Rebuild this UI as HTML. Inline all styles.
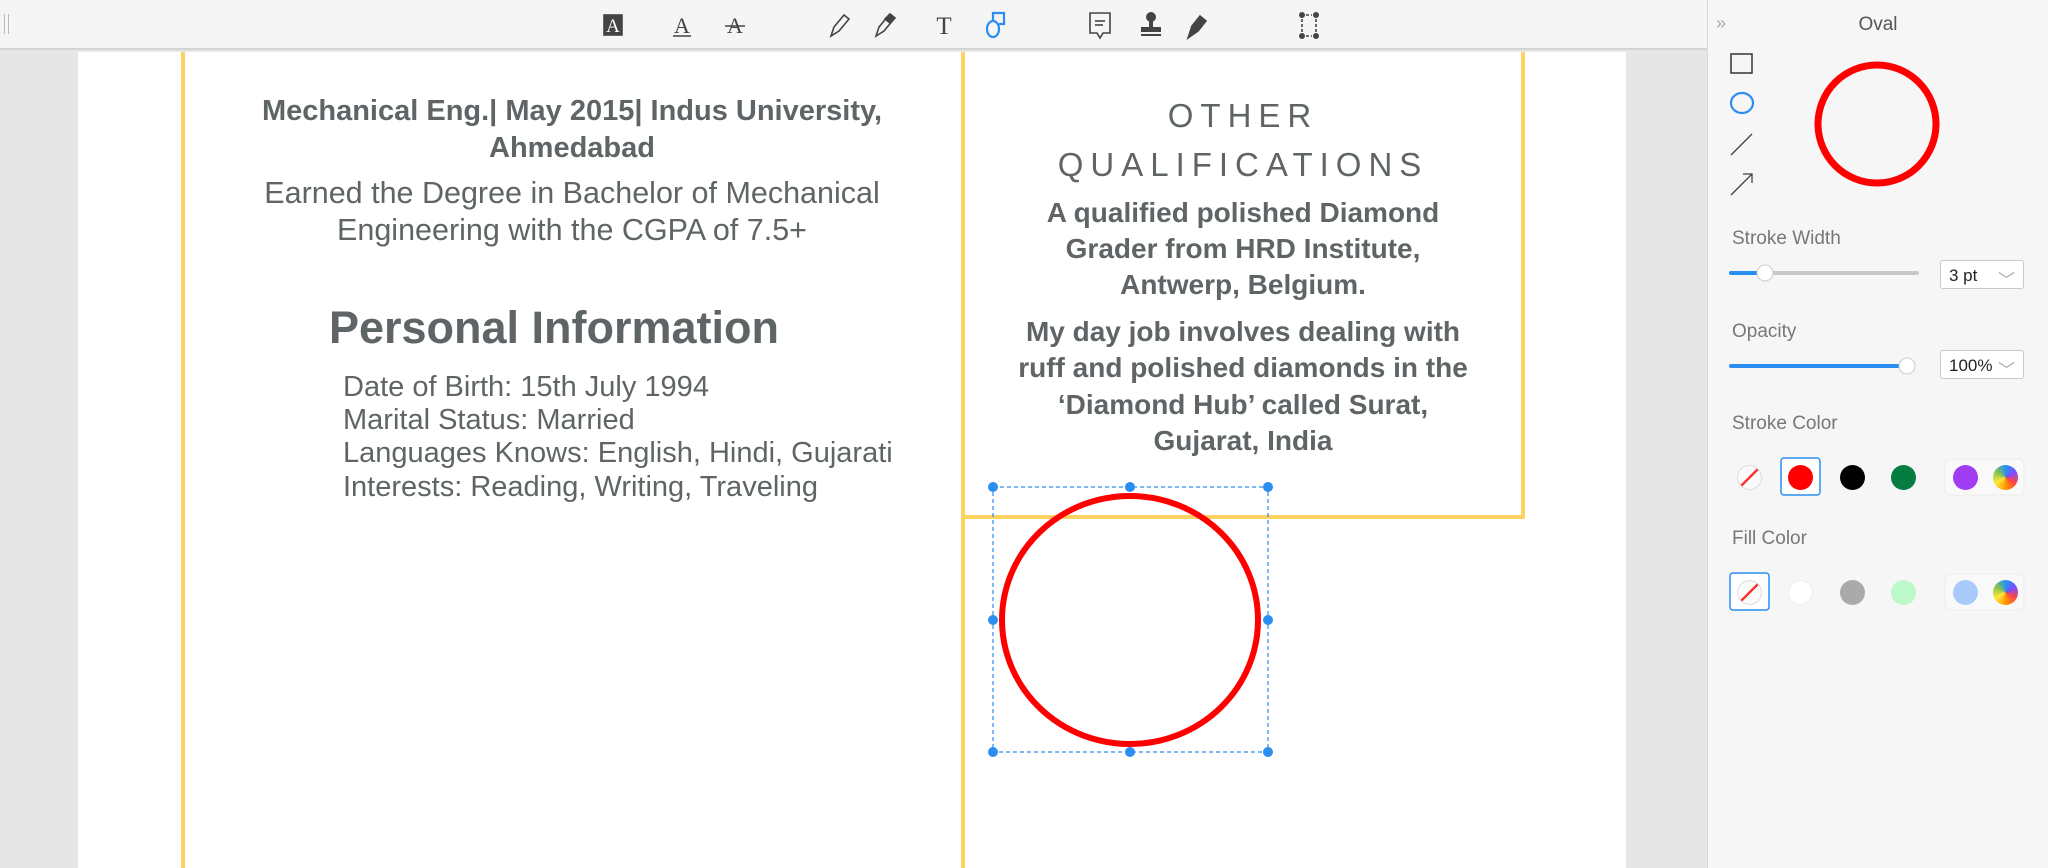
<!DOCTYPE html>
<html><head><meta charset="utf-8"><style>
*{margin:0;padding:0;box-sizing:border-box}
body{width:2048px;height:868px;overflow:hidden;background:#e6e6e6;font-family:"Liberation Sans",sans-serif;position:relative}
.a{position:absolute}
.t{position:absolute;color:#5f6566;white-space:nowrap;text-align:center;line-height:36px;transform:translateY(-18px)}
.b{font-weight:bold}
.lbl{position:absolute;color:#777;font-size:19px;transform:translateY(-11px)}
.dd{position:absolute;width:84px;height:29px;border:1px solid #c8c8c8;border-radius:3px;background:#fff;font-size:17px;color:#222;padding:5px 0 0 8px}
.sw{position:absolute;width:25px;height:25px;border-radius:50%;transform:translate(-12px,-12px)}
</style></head><body>
<!-- toolbar -->
<div class="a" style="left:0;top:0;width:1707px;height:50px;background:#f5f5f5;border-bottom:2px solid #d4d4d4"></div>
<div class="a" style="left:4px;top:14px;width:5px;height:20px;border-left:1px solid #bbb;border-right:1px solid #bbb"></div>
<svg class="a" style="left:0;top:0" width="1707" height="50" fill="none" stroke="#444" stroke-width="1.6">
<rect x="604" y="15" width="18" height="20" fill="#444"/><text x="613" y="32" font-family="Liberation Serif" font-size="19" fill="#fff" stroke="none" text-anchor="middle">A</text>
<text x="682" y="33" font-family="Liberation Serif" font-size="22" fill="#444" stroke="none" text-anchor="middle">A</text><line x1="673" y1="36" x2="691" y2="36"/>
<text x="735" y="33" font-family="Liberation Serif" font-size="22" fill="#444" stroke="none" text-anchor="middle">A</text><line x1="725" y1="26" x2="745" y2="26"/>
<path d="M831 36 l3-9 l10-12 l5 4 l-10 12 z"/>
<path d="M876 36 l3-9 l10-12 l5 4 l-10 12 z"/><path d="M885 19 l5-5 l5 4 l-5 5z" fill="#444"/>
<text x="944" y="34" font-family="Liberation Serif" font-size="25" fill="#444" stroke="none" text-anchor="middle">T</text>
<g stroke="#2a8df0" stroke-width="2.2"><ellipse cx="993" cy="29" rx="6" ry="8"/><path d="M993 21 v-8 h11 v11 h-5"/></g>
<path d="M1090 13 h20 v20 h-7 l-3 5 l-3 -5 h-7z"/><line x1="1095" y1="21" x2="1105" y2="21"/><line x1="1095" y1="25" x2="1103" y2="25"/>
<g fill="#444" stroke="none"><circle cx="1151" cy="17" r="5"/><rect x="1149" y="20" width="4" height="8"/><rect x="1141" y="27" width="20" height="5"/><rect x="1141" y="34" width="20" height="2"/></g>
<path d="M1188 38 l4-12 l8-10 l6 5 l-8 10 z" fill="#444"/>
<g fill="#444" stroke="none"><circle cx="1302" cy="15" r="3"/><circle cx="1316" cy="15" r="3"/><circle cx="1302" cy="36" r="3"/><circle cx="1316" cy="36" r="3"/></g>
<path d="M1306 15h6M1306 36h6M1302 19v13M1316 19v13" stroke-dasharray="3 2"/>
</svg>
<!-- page -->
<div class="a" style="left:78px;top:52px;width:1548px;height:816px;background:#fff"></div>
<div class="a" style="left:181px;top:52px;width:4px;height:816px;background:#fdd25e"></div>
<div class="a" style="left:961px;top:52px;width:4px;height:816px;background:#fdd25e"></div>
<div class="a" style="left:1521px;top:52px;width:4px;height:467px;background:#fdd25e"></div>
<div class="a" style="left:961px;top:515px;width:564px;height:4px;background:#fdd25e"></div>
<div class="t b" style="left:172px;width:800px;top:111px;font-size:29px">Mechanical Eng.| May 2015| Indus University,</div>
<div class="t b" style="left:172px;width:800px;top:148px;font-size:29px">Ahmedabad</div>
<div class="t" style="left:172px;width:800px;top:193px;font-size:30.5px">Earned the Degree in Bachelor of Mechanical</div>
<div class="t" style="left:172px;width:800px;top:230px;font-size:30.5px">Engineering with the CGPA of 7.5+</div>
<div class="t b" style="left:154px;width:800px;top:328px;font-size:45px;line-height:50px;transform:translateY(-25px)">Personal Information</div>
<div class="t" style="left:343px;top:387px;font-size:29px;text-align:left">Date of Birth: 15th July 1994</div>
<div class="t" style="left:343px;top:420px;font-size:29px;text-align:left">Marital Status: Married</div>
<div class="t" style="left:343px;top:453px;font-size:29px;text-align:left">Languages Knows: English, Hindi, Gujarati</div>
<div class="t" style="left:343px;top:487px;font-size:29px;text-align:left">Interests: Reading, Writing, Traveling</div>
<div class="t" style="left:943px;width:600px;top:116px;font-size:33px;letter-spacing:7px">OTHER</div>
<div class="t" style="left:943px;width:600px;top:165px;font-size:33px;letter-spacing:7px">QUALIFICATIONS</div>
<div class="t b" style="left:943px;width:600px;top:213px;font-size:28px">A qualified polished Diamond</div>
<div class="t b" style="left:943px;width:600px;top:249px;font-size:28px">Grader from HRD Institute,</div>
<div class="t b" style="left:943px;width:600px;top:285px;font-size:28px">Antwerp, Belgium.</div>
<div class="t b" style="left:943px;width:600px;top:332px;font-size:28px">My day job involves dealing with</div>
<div class="t b" style="left:943px;width:600px;top:368px;font-size:28px">ruff and polished diamonds in the</div>
<div class="t b" style="left:943px;width:600px;top:405px;font-size:28px">‘Diamond Hub’ called Surat,</div>
<div class="t b" style="left:943px;width:600px;top:441px;font-size:28px">Gujarat, India</div>
<svg class="a" style="left:0;top:0" width="1707" height="868">
<rect x="993" y="487" width="275" height="265" fill="none" stroke="#2a8df0" stroke-width="1.2" stroke-dasharray="4 3"/>
<ellipse cx="1130" cy="620" rx="128" ry="124" fill="none" stroke="#ff0000" stroke-width="6"/>
<g fill="#2a8df0"><circle cx="993" cy="487" r="5"/><circle cx="1130" cy="487" r="5"/><circle cx="1268" cy="487" r="5"/><circle cx="993" cy="620" r="5"/><circle cx="1268" cy="620" r="5"/><circle cx="993" cy="752" r="5"/><circle cx="1130" cy="752" r="5"/><circle cx="1268" cy="752" r="5"/></g>
</svg>
<!-- panel -->
<div class="a" style="left:1707px;top:0;width:341px;height:868px;background:#f6f6f6;border-left:1px solid #d8d8d8"></div>
<div class="a" style="left:1716px;top:13px;color:#aaa;font-size:18px">»</div>
<div class="a" style="left:1700px;top:14px;width:356px;text-align:center;color:#555;font-size:19px">Oval</div>
<svg class="a" style="left:1707px;top:0" width="341" height="868" fill="none">
<rect x="24" y="54" width="21" height="19" stroke="#333" stroke-width="1.5"/>
<ellipse cx="35" cy="103" rx="11" ry="10" stroke="#2a8df0" stroke-width="2.2"/>
<line x1="24" y1="155" x2="45" y2="134" stroke="#444" stroke-width="1.3"/>
<path d="M24 195 L45 174 M36 174 h9 v9" stroke="#444" stroke-width="1.3"/>
<ellipse cx="170" cy="124" rx="59" ry="59" stroke="#ff0000" stroke-width="7"/>
<line x1="24" y1="273" x2="210" y2="273" stroke="#c8c8c8" stroke-width="4" stroke-linecap="round"/>
<line x1="24" y1="273" x2="57" y2="273" stroke="#2a8df0" stroke-width="4" stroke-linecap="round"/>
<circle cx="58" cy="273" r="8" fill="#fff" stroke="#ccc"/>
<line x1="24" y1="366" x2="200" y2="366" stroke="#2a8df0" stroke-width="4" stroke-linecap="round"/>
<circle cx="200" cy="366" r="8" fill="#fff" stroke="#ccc"/>
<rect x="238" y="459" width="79" height="36" rx="5" fill="#f9f9f9" stroke="#ececec"/>
<rect x="238" y="574" width="79" height="36" rx="5" fill="#f9f9f9" stroke="#ececec"/>
<rect x="74" y="458" width="39" height="37" rx="3" fill="#fff" stroke="#2a8df0" stroke-width="1.5"/>
<rect x="23" y="573" width="39" height="37" rx="3" fill="#fff" stroke="#2a8df0" stroke-width="1.5"/>
</svg>
<div class="lbl" style="left:1732px;top:239px">Stroke Width</div>
<div class="dd" style="left:1940px;top:260px">3 pt<span style="position:absolute;right:8px;color:#aaa">﹀</span></div>
<div class="lbl" style="left:1732px;top:332px">Opacity</div>
<div class="dd" style="left:1940px;top:350px">100%<span style="position:absolute;right:8px;color:#aaa">﹀</span></div>
<div class="lbl" style="left:1732px;top:424px">Stroke Color</div>
<div class="lbl" style="left:1732px;top:539px">Fill Color</div>
<div class="sw" style="left:1749px;top:477px;background:#fafafa;border:1px solid #ddd;background-image:linear-gradient(135deg,transparent 46%,#f33 46%,#f33 54%,transparent 54%)"></div>
<div class="sw" style="left:1800px;top:477px;background:#f00"></div>
<div class="sw" style="left:1852px;top:477px;background:#000"></div>
<div class="sw" style="left:1903px;top:477px;background:#067d40"></div>
<div class="sw" style="left:1965px;top:477px;background:#a23cf2"></div>
<div class="sw" style="left:2005px;top:477px;background:conic-gradient(#2196f3,#7c4dff,#f44,#ff9800,#ffeb3b,#8bc34a,#2196f3)"></div>
<div class="sw" style="left:1749px;top:592px;background:#fafafa;border:1px solid #ddd;background-image:linear-gradient(135deg,transparent 46%,#f33 46%,#f33 54%,transparent 54%)"></div>
<div class="sw" style="left:1800px;top:592px;background:#fff;border:1px solid #eee"></div>
<div class="sw" style="left:1852px;top:592px;background:#aaa"></div>
<div class="sw" style="left:1903px;top:592px;background:#bdf9c8"></div>
<div class="sw" style="left:1965px;top:592px;background:#a9cbfb"></div>
<div class="sw" style="left:2005px;top:592px;background:conic-gradient(#2196f3,#7c4dff,#f44,#ff9800,#ffeb3b,#8bc34a,#2196f3)"></div>
</body></html>
